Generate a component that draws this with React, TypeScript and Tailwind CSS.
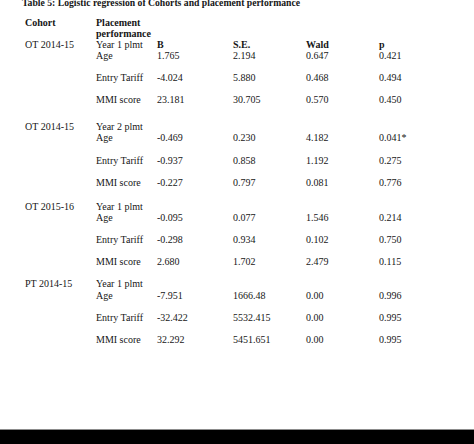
import React from 'react';

type Line = { gap: string; cells: string[]; bold?: boolean[] };

// vertical gaps are taken from the scan, so they are not perfectly even
const lines: Line[] = [
  { gap: 'mt-[9px]', cells: ['Cohort', 'Placement', '', '', '', ''], bold: [true, true] },
  { gap: 'mt-0', cells: ['', 'performance', '', '', '', ''], bold: [false, true] },
  { gap: 'mt-0', cells: ['OT 2014-15', 'Year 1 plmt', 'B', 'S.E.', 'Wald', 'p'], bold: [false, false, true, true, true, true] },
  { gap: 'mt-0', cells: ['', 'Age', '1.765', '2.194', '0.647', '0.421'] },
  { gap: 'mt-[11px]', cells: ['', 'Entry Tariff', '-4.024', '5.880', '0.468', '0.494'] },
  { gap: 'mt-[11px]', cells: ['', 'MMI score', '23.181', '30.705', '0.570', '0.450'] },
  { gap: 'mt-[16px]', cells: ['OT 2014-15', 'Year 2 plmt', '', '', '', ''] },
  { gap: 'mt-0', cells: ['', 'Age', '-0.469', '0.230', '4.182', '0.041*'] },
  { gap: 'mt-[12px]', cells: ['', 'Entry Tariff', '-0.937', '0.858', '1.192', '0.275'] },
  { gap: 'mt-[11px]', cells: ['', 'MMI score', '-0.227', '0.797', '0.081', '0.776'] },
  { gap: 'mt-[13px]', cells: ['OT 2015-16', 'Year 1 plmt', '', '', '', ''] },
  { gap: 'mt-0', cells: ['', 'Age', '-0.095', '0.077', '1.546', '0.214'] },
  { gap: 'mt-[11px]', cells: ['', 'Entry Tariff', '-0.298', '0.934', '0.102', '0.750'] },
  { gap: 'mt-[11px]', cells: ['', 'MMI score', '2.680', '1.702', '2.479', '0.115'] },
  { gap: 'mt-[11px]', cells: ['PT 2014-15', 'Year 1 plmt', '', '', '', ''] },
  { gap: 'mt-[1px]', cells: ['', 'Age', '-7.951', '1666.48', '0.00', '0.996'] },
  { gap: 'mt-[11px]', cells: ['', 'Entry Tariff', '-32.422', '5532.415', '0.00', '0.995'] },
  { gap: 'mt-[11px]', cells: ['', 'MMI score', '32.292', '5451.651', '0.00', '0.995'] },
];

export default function App() {
  return (
    <div className="flex h-[444px] w-[474px] flex-col overflow-hidden bg-white font-['Liberation_Serif',serif] text-[10px] leading-[11px] text-[#161616]">
      {/* the scan cuts the caption through the middle, so it sits a little above the top edge */}
      <div className="pl-[22px] mt-[-3px] text-[9.7px] font-bold whitespace-nowrap">
        Table 5: Logistic regression of Cohorts and placement performance
      </div>

      {lines.map((line, i) => (
        <div
          key={i}
          className={`${line.gap} grid grid-cols-[71px_61px_76px_73px_73px_1fr] pl-[25px] whitespace-nowrap`}
        >
          {line.cells.map((c, j) => (
            <div key={j} className={line.bold?.[j] ? 'font-bold' : ''}>
              {c}
            </div>
          ))}
        </div>
      ))}

      <div className="flex-1" />
      <div className="h-[15px] border-t border-[#8c8c8c] bg-black" />
    </div>
  );
}
